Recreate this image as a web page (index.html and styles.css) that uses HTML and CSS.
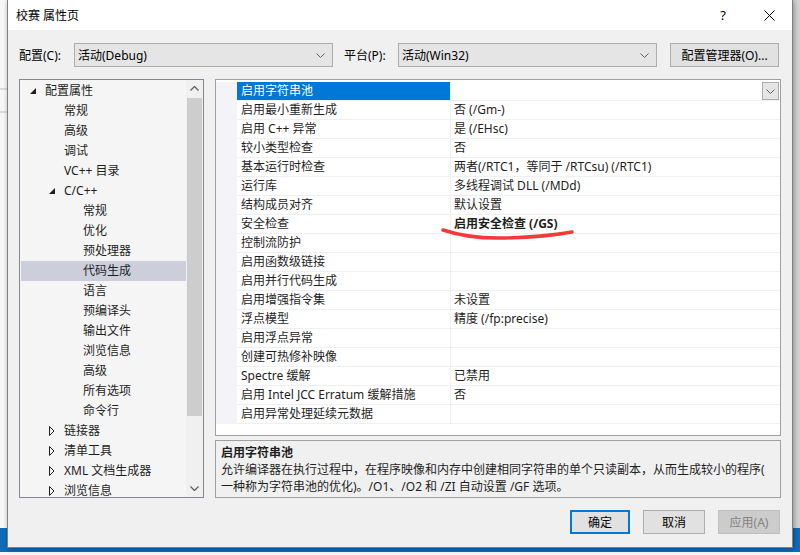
FILE: index.html
```html
<!DOCTYPE html>
<html lang="zh-CN">
<head>
<meta charset="utf-8">
<title>校赛 属性页</title>
<link rel="stylesheet" href="styles.css">
</head>
<body>
<div class="desktop">
  <div class="bg-line bg-line-1"></div>
  <div class="bg-line bg-line-2"></div>
  <div class="bg-shade"></div>
  <div class="statusbar"></div>

  <div class="dialog">
    <div class="titlebar">
      <span class="title">校赛 属性页</span>
      <span class="caption-btn">?</span>
      <span class="caption-btn">
        <svg width="11" height="11" viewBox="0 0 11 11"><path d="M0.5 0.5 L10.5 10.5 M10.5 0.5 L0.5 10.5" stroke="#000" stroke-width="1" fill="none"/></svg>
      </span>
    </div>

    <div class="toolbar">
      <span class="lbl lbl-config">配置(C):</span>
      <div class="combo"><span>活动(Debug)</span>
        <svg class="chev" width="9" height="5" viewBox="0 0 9 5"><path d="M0.5 0.5 L4.5 4.5 L8.5 0.5" stroke="#606060" fill="none"/></svg>
      </div>
      <span class="lbl lbl-platform">平台(P):</span>
      <div class="combo"><span>活动(Win32)</span>
        <svg class="chev" width="9" height="5" viewBox="0 0 9 5"><path d="M0.5 0.5 L4.5 4.5 L8.5 0.5" stroke="#606060" fill="none"/></svg>
      </div>
      <button class="btn btn-mgr">配置管理器(O)...</button>
    </div>

    <div class="main">
      <div class="tree">
        <div class="tree-list">
          <div class="node l1"><span class="tw"><svg width="7" height="7" viewBox="0 0 7 7"><polygon points="6,0 6,6 0,6" fill="#1e1e1e"/></svg></span>配置属性</div>
          <div class="node l2"><span class="tw"></span>常规</div>
          <div class="node l2"><span class="tw"></span>高级</div>
          <div class="node l2"><span class="tw"></span>调试</div>
          <div class="node l2"><span class="tw"></span>VC++ 目录</div>
          <div class="node l2"><span class="tw"><svg width="7" height="7" viewBox="0 0 7 7"><polygon points="6,0 6,6 0,6" fill="#1e1e1e"/></svg></span>C/C++</div>
          <div class="node l3"><span class="tw"></span>常规</div>
          <div class="node l3"><span class="tw"></span>优化</div>
          <div class="node l3"><span class="tw"></span>预处理器</div>
          <div class="node l3 selected"><span class="tw"></span>代码生成</div>
          <div class="node l3"><span class="tw"></span>语言</div>
          <div class="node l3"><span class="tw"></span>预编译头</div>
          <div class="node l3"><span class="tw"></span>输出文件</div>
          <div class="node l3"><span class="tw"></span>浏览信息</div>
          <div class="node l3"><span class="tw"></span>高级</div>
          <div class="node l3"><span class="tw"></span>所有选项</div>
          <div class="node l3"><span class="tw"></span>命令行</div>
          <div class="node l2"><span class="tw"><svg width="6" height="10" viewBox="0 0 6 10"><polygon points="0.5,0.5 5,5 0.5,9.5" fill="none" stroke="#1e1e1e"/></svg></span>链接器</div>
          <div class="node l2"><span class="tw"><svg width="6" height="10" viewBox="0 0 6 10"><polygon points="0.5,0.5 5,5 0.5,9.5" fill="none" stroke="#1e1e1e"/></svg></span>清单工具</div>
          <div class="node l2"><span class="tw"><svg width="6" height="10" viewBox="0 0 6 10"><polygon points="0.5,0.5 5,5 0.5,9.5" fill="none" stroke="#1e1e1e"/></svg></span>XML 文档生成器</div>
          <div class="node l2"><span class="tw"><svg width="6" height="10" viewBox="0 0 6 10"><polygon points="0.5,0.5 5,5 0.5,9.5" fill="none" stroke="#1e1e1e"/></svg></span>浏览信息</div>
        </div>
        <div class="vscroll">
          <div class="sb-arrow"><svg width="9" height="5" viewBox="0 0 9 5"><path d="M0.5 4.5 L4.5 0.5 L8.5 4.5" stroke="#606060" stroke-width="1.3" fill="none"/></svg></div>
          <div class="sb-track"><div class="sb-thumb"></div></div>
          <div class="sb-arrow"><svg width="9" height="5" viewBox="0 0 9 5"><path d="M0.5 0.5 L4.5 4.5 L8.5 0.5" stroke="#606060" stroke-width="1.3" fill="none"/></svg></div>
        </div>
      </div>

      <div class="right">
        <div class="grid">
          <div class="row sel"><span class="gut"></span><span class="name">启用字符串池</span><span class="val"><span class="dd"><svg width="9" height="5" viewBox="0 0 9 5"><path d="M0.5 0.5 L4.5 4.5 L8.5 0.5" stroke="#606060" fill="none"/></svg></span></span></div>
          <div class="row"><span class="gut"></span><span class="name">启用最小重新生成</span><span class="val">否 (/Gm-)</span></div>
          <div class="row"><span class="gut"></span><span class="name">启用 C++ 异常</span><span class="val">是 (/EHsc)</span></div>
          <div class="row"><span class="gut"></span><span class="name">较小类型检查</span><span class="val">否</span></div>
          <div class="row"><span class="gut"></span><span class="name">基本运行时检查</span><span class="val">两者(/RTC1，等同于 /RTCsu) (/RTC1)</span></div>
          <div class="row"><span class="gut"></span><span class="name">运行库</span><span class="val">多线程调试 DLL (/MDd)</span></div>
          <div class="row"><span class="gut"></span><span class="name">结构成员对齐</span><span class="val">默认设置</span></div>
          <div class="row"><span class="gut"></span><span class="name">安全检查</span><span class="val bold">启用安全检查 (/GS)</span></div>
          <div class="row"><span class="gut"></span><span class="name">控制流防护</span><span class="val"></span></div>
          <div class="row"><span class="gut"></span><span class="name">启用函数级链接</span><span class="val"></span></div>
          <div class="row"><span class="gut"></span><span class="name">启用并行代码生成</span><span class="val"></span></div>
          <div class="row"><span class="gut"></span><span class="name">启用增强指令集</span><span class="val">未设置</span></div>
          <div class="row"><span class="gut"></span><span class="name">浮点模型</span><span class="val">精度 (/fp:precise)</span></div>
          <div class="row"><span class="gut"></span><span class="name">启用浮点异常</span><span class="val"></span></div>
          <div class="row"><span class="gut"></span><span class="name">创建可热修补映像</span><span class="val"></span></div>
          <div class="row"><span class="gut"></span><span class="name">Spectre 缓解</span><span class="val">已禁用</span></div>
          <div class="row"><span class="gut"></span><span class="name">启用 Intel JCC Erratum 缓解措施</span><span class="val">否</span></div>
          <div class="row"><span class="gut"></span><span class="name">启用异常处理延续元数据</span><span class="val"></span></div>
        </div>
        <div class="desc">
          <div class="desc-title">启用字符串池</div>
          <div class="desc-text">允许编译器在执行过程中，在程序映像和内存中创建相同字符串的单个只读副本，从而生成较小的程序(<br>一种称为字符串池的优化)。/O1、/O2 和 /ZI 自动设置 /GF 选项。</div>
        </div>
      </div>
    </div>

    <div class="footer">
      <button class="btn btn-ok">确定</button>
      <button class="btn btn-cancel">取消</button>
      <button class="btn btn-apply" disabled>应用(A)</button>
    </div>
  </div>

  <svg class="annot" width="800" height="555" viewBox="0 0 800 555">
    <path d="M443 230 Q 470 239 505 238 Q 545 237 572 232" stroke="#f23a3a" stroke-width="3.5" stroke-linecap="round" fill="none"/>
  </svg>
</div>
</body>
</html>
```

FILE: styles.css
```css
* { box-sizing: border-box; }
html, body { margin: 0; padding: 0; }
body {
  width: 800px;
  height: 555px;
  overflow: hidden;
  font-family: "Noto Sans", "Noto Sans CJK SC", sans-serif;
  font-size: 12px;
  color: #000;
}

.desktop {
  position: relative;
  width: 800px;
  height: 555px;
  background: #f7f7f7;
}
.bg-line { position: absolute; left: 0; width: 8px; height: 2px; background: #dadada; }
.bg-line-1 { top: 88px; }
.bg-line-2 { top: 111px; }
.bg-shade { position: absolute; right: 0; top: 0; width: 8px; height: 528px; background: #d2d2d2; }
.statusbar { position: absolute; left: 0; right: 0; top: 528px; height: 24px; background: #0f6cbd; }

.dialog {
  position: absolute;
  left: 7px;
  top: 0;
  width: 786px;
  height: 548px;
  background: #f0f0f0;
  border: 1px solid #808080;
  border-top: none;
  box-shadow: 1px 1px 5px rgba(0,0,0,0.35);
  display: flex;
  flex-direction: column;
}

.titlebar {
  height: 30px;
  background: #fff;
  display: flex;
  align-items: center;
  padding-left: 8px;
}
.title { flex: 1; font-size: 12px; }
.caption-btn {
  width: 46px;
  height: 30px;
  display: flex;
  align-items: center;
  justify-content: center;
  font-size: 13px;
}

.toolbar {
  margin-top: 13px;
  height: 24px;
  display: flex;
  align-items: center;
  padding-left: 11px;
}
.lbl { display: inline-block; }
.lbl-config { width: 55px; }
.lbl-platform { width: 54px; margin-left: 11px; }
.combo {
  width: 259px;
  height: 24px;
  background: #e5e5e5;
  border: 1px solid #adadad;
  display: flex;
  align-items: center;
  justify-content: space-between;
  padding: 0 7px 0 3px;
}
.btn {
  font-family: inherit;
  font-size: 12px;
  color: #000;
  background: #e1e1e1;
  border: 1px solid #adadad;
  height: 24px;
  padding: 0;
  margin: 0;
}
.btn-mgr { width: 109px; margin-left: 13px; }

.main {
  margin-top: 12px;
  height: 419px;
  display: flex;
  padding: 0 11px;
}

.tree {
  width: 185px;
  height: 419px;
  border: 1px solid #828790;
  background: #f5f5f5;
  display: flex;
}
.tree-list { flex: 1; padding-top: 1px; }
.node {
  height: 20px;
  line-height: 20px;
  display: flex;
  align-items: center;
  white-space: nowrap;
  color: #1e1e1e;
}
.node .tw { width: 15px; display: flex; align-items: center; }
.l1 { padding-left: 10px; }
.l2 { padding-left: 29px; }
.l3 { padding-left: 48px; }
.node.selected { background: #cccedb; margin-left: 1px; padding-left: 47px; }

.vscroll {
  width: 17px;
  background: #f0f0f0;
  display: flex;
  flex-direction: column;
}
.sb-arrow { height: 17px; display: flex; align-items: center; justify-content: center; }
.sb-track { flex: 1; padding: 1px 1px 0 1px; }
.sb-thumb { height: 318px; background: #cdcdcd; }

.right {
  margin-left: 11px;
  width: 566px;
  display: flex;
  flex-direction: column;
}
.grid {
  height: 357px;
  border: 1px solid #a0a0a0;
  background: #fff;
  padding-top: 2px;
}
.row {
  display: grid;
  grid-template-columns: 21px 214px 1fr;
  height: 19px;
  line-height: 18px;
  white-space: nowrap;
  color: #1e1e1e;
}
.row .gut { background: #f3f3f8; }
.row .name {
  padding-left: 4px;
  border-right: 1px solid #f0f0f4;
  border-bottom: 1px solid #f0f0f4;
  overflow: hidden;
}
.row .val {
  padding-left: 3px;
  border-bottom: 1px solid #f0f0f4;
  overflow: hidden;
  display: flex;
  justify-content: space-between;
}
.row .val.bold { font-weight: bold; }
.row.sel .name { background: #0078d7; color: #fff; }
.dd {
  margin-left: auto;
  width: 17px;
  height: 18px;
  background: #e5e5e5;
  border: 1px solid #adadad;
  display: flex;
  align-items: center;
  justify-content: center;
  margin-right: 1px;
}

.desc {
  margin-top: 4px;
  height: 58px;
  border: 1px solid #a0a0a0;
  padding: 3px 0 0 5px;
  line-height: 17px;
  color: #1e1e1e;
}
.desc-title { font-weight: bold; }
.desc-text { white-space: nowrap; }

.footer {
  margin-top: 12px;
  display: flex;
  justify-content: flex-end;
  padding-right: 12px;
  gap: 13px;
}
.btn-ok { width: 60px; border: 2px solid #0078d7; }
.btn-cancel { width: 62px; }
.btn-apply { width: 62px; background: #cccccc; border-color: #bfbfbf; color: #838383; }

.annot { position: absolute; left: 0; top: 0; pointer-events: none; }
```
